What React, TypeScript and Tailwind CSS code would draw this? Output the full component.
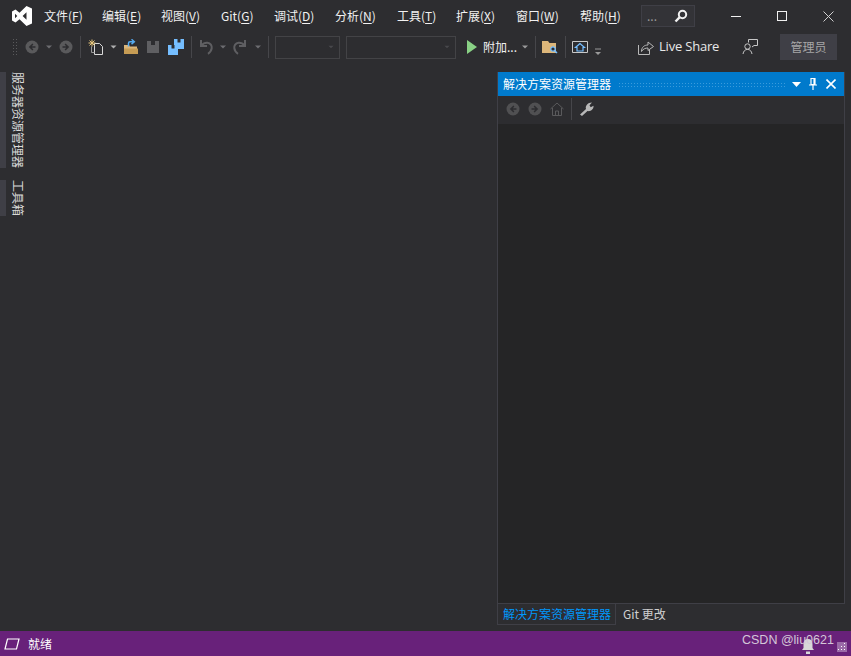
import React from "react";

const Menu = ({ t, k, w }: { t: string; k: string; w: string }) => (
  <div className={`${w} shrink-0 whitespace-nowrap`}>
    {t}(<span className="underline underline-offset-2">{k}</span>)
  </div>
);

const Dd = ({ c = "#6d6d70", w = "w-[14px]" }: { c?: string; w?: string }) => (
  <svg className={`${w} h-[6px] shrink-0`} viewBox="0 0 14 6" preserveAspectRatio="xMidYMid meet">
    <path d="M4 1.500h6l-3 3z" fill={c} />
  </svg>
);

const Sep = ({ w = "w-[13px]" }: { w?: string }) => (
  <div className={`${w} h-[22px] shrink-0 flex justify-center`}>
    <div className="w-px h-full bg-[#46464a]" />
  </div>
);

const Circ = ({ dir, c = "#5a5a5c", w = "w-[16px]" }: { dir: "l" | "r"; c?: string; w?: string }) => (
  <svg className={`${w} h-[14px] shrink-0`} viewBox="0 0 14 14">
    <circle cx="7" cy="7" r="6.500" fill={c} />
    {dir === "l" ? (
      <path d="M10.500 6.200H6.800l1.600-1.600-1-1L3.800 7l3.600 3.400 1-1-1.600-1.600h3.700z" fill="#2d2d30" />
    ) : (
      <path d="M3.500 6.200h3.700L5.600 4.600l1-1L10.200 7l-3.600 3.400-1-1 1.600-1.600H3.500z" fill="#2d2d30" />
    )}
  </svg>
);

const Logo = () => (
  <svg className="w-[20px] h-[20px]" viewBox="0 0 20 20">
    <path
      fill="#fff"
      fillRule="evenodd"
      d="M14.500 0 20 2.500v15L14.500 20l-7-6.800-4 3.300L0 14.500v-9l3.500-2 4 3.300zM14.500 6.200 10.600 10l3.900 3.800zM3 7.800v4.400L5.300 10z"
    />
  </svg>
);

const Floppy = ({ x, y, c, n }: { x: number; y: number; c: string; n: string }) => (
  <g transform={`translate(${x} ${y})`}>
    <path d="M0 0h10v10H0z" fill={c} />
    <path d="M3.500 0h3v3.500h-3z" fill={n} />
  </g>
);

export default function App() {
  return (
    <div
      className="w-[851px] h-[656px] bg-[#2d2d30] text-[#f1f1f1] text-[12px] flex flex-col overflow-hidden relative"
      style={{ fontFamily: '"Noto Sans CJK SC", "Noto Sans", sans-serif' }}
    >
      {/* title row */}
      <div className="h-[32px] flex items-center shrink-0">
        <div className="w-[44px] pl-[12px] shrink-0 flex items-center">
          <Logo />
        </div>
        <Menu t="文件" k="F" w="w-[58px]" />
        <Menu t="编辑" k="E" w="w-[59px]" />
        <Menu t="视图" k="V" w="w-[60px]" />
        <Menu t="Git" k="G" w="w-[53px]" />
        <Menu t="调试" k="D" w="w-[61px]" />
        <Menu t="分析" k="N" w="w-[62px]" />
        <Menu t="工具" k="T" w="w-[59px]" />
        <Menu t="扩展" k="X" w="w-[60px]" />
        <Menu t="窗口" k="W" w="w-[64px]" />
        <Menu t="帮助" k="H" w="w-[61px]" />
        <div className="w-[54px] h-[22px] shrink-0 bg-[#333337] border border-[#3f3f46] flex items-center justify-between pl-[5px] pr-[6px] text-[#9a9a9a]">
          <span className="leading-none">...</span>
          <svg className="w-[14px] h-[14px]" viewBox="0 0 14 14">
            <circle cx="8.500" cy="5.500" r="3.700" fill="none" stroke="#f1f1f1" strokeWidth="2" />
            <path d="M5.800 8.200 1.500 12.500" stroke="#f1f1f1" strokeWidth="2.400" />
          </svg>
        </div>
        <div className="flex-1 flex items-center">
          <div className="w-[46px] flex justify-end">
            <div className="w-[10px] h-px bg-[#f1f1f1]" />
          </div>
          <div className="w-[46px] flex justify-end">
            <div className="w-[10px] h-[10px] border border-[#f1f1f1]" />
          </div>
          <svg className="w-[11px] h-[11px] ml-[36px]" viewBox="0 0 11 11">
            <path d="M.5.5l10 10M10.500.5l-10 10" stroke="#d0d0d0" strokeWidth="1" />
          </svg>
        </div>
      </div>

      {/* toolbar row */}
      <div className="h-[30px] flex items-center shrink-0 pl-[12px]">
        <div className="w-[6px] h-[19px] shrink-0 mr-[7px] bg-[radial-gradient(#5a5a5c_1px,transparent_1px)] bg-[length:3px_3px]" />
        <Circ dir="l" w="w-[14px]" />
        <Dd w="w-[20px]" />
        <Circ dir="r" w="w-[14px]" />
        <Sep w="w-[15px]" />
        <svg className="w-[16px] h-[16px] shrink-0" viewBox="0 0 16 16">
          <path d="M6.500 4.500h5l3 3v8h-8z" fill="none" stroke="#d8d8d8" />
          <path d="M3.500 7.500v6h3" fill="none" stroke="#9a9a9a" />
          <path d="M4 .5v7M.5 4h7M1.500 1.500l5 5M6.500 1.500l-5 5" stroke="#e8c77b" />
        </svg>
        <Dd w="w-[19px]" c="#b0b0b0" />
        <svg className="w-[16px] h-[16px] shrink-0" viewBox="0 0 16 16">
          <path d="M1 6h5l1 1.500h7V15H1z" fill="#dcb67a" />
          <path d="M1 9.500h14V15H1z" fill="#c69c54" />
          <path d="M5.500 7.500V4.200c0-1 .5-1.500 1.500-1.500h3M8.500 .3l2.800 2.400-2.800 2.400" fill="none" stroke="#55aaef" strokeWidth="1.500" />
        </svg>
        <svg className="w-[12px] h-[12px] shrink-0 ml-[8px]" viewBox="0 0 12 12">
          <path d="M0 0h12v12H0z" fill="#5f5f62" />
          <path d="M4 0h4v4H4z" fill="#2d2d30" />
        </svg>
        <svg className="w-[16px] h-[16px] shrink-0 ml-[9px]" viewBox="0 0 16 16">
          <Floppy x={6} y={0} c="#75beff" n="#2d2d30" />
          <Floppy x={0} y={6} c="#75beff" n="#2d2d30" />
        </svg>
        <Sep w="w-[14px]" />
        <svg className="w-[16px] h-[16px] shrink-0" viewBox="0 0 16 16">
          <path d="M3 1v6h6M3.500 6.500C5 4.500 7 3.500 9.500 3.700c3 .3 4.500 3 4.200 5.500-.3 2.300-1.800 4.400-3.700 5.600" fill="none" stroke="#5f5f62" strokeWidth="2" />
        </svg>
        <Dd w="w-[18px]" />
        <svg className="w-[16px] h-[16px] shrink-0" viewBox="0 0 16 16">
          <path d="M13 1v6H7M12.500 6.500C11 4.500 9 3.500 6.500 3.700c-3 .3-4.500 3-4.200 5.500.3 2.300 1.800 4.400 3.700 5.600" fill="none" stroke="#5f5f62" strokeWidth="2" />
        </svg>
        <Dd w="w-[14px] ml-[3px]" />
        <Sep w="w-[6px]" />
        <div className="w-[65px] h-[23px] shrink-0 ml-[4px] border border-[#434346] flex items-center justify-end pr-[2px]">
          <Dd c="#48484b" w="w-[12px]" />
        </div>
        <div className="w-[110px] h-[23px] shrink-0 ml-[6px] border border-[#434346] flex items-center justify-end pr-[2px]">
          <Dd c="#48484b" w="w-[12px]" />
        </div>
        <svg className="w-[10px] h-[14px] shrink-0 ml-[11px]" viewBox="0 0 10 14">
          <path d="M0 0l10 7-10 7z" fill="#89d185" />
        </svg>
        <span className="ml-[6px] shrink-0 w-[35px] whitespace-nowrap">附加...</span>
        <Dd c="#9a9a9a" w="w-[14px]" />
        <Sep w="w-[6px]" />
        <svg className="w-[16px] h-[14px] shrink-0 ml-[4px]" viewBox="0 0 16 14">
          <path d="M0 1h6l1.500 2H14v10H0z" fill="#dcb67a" />
          <circle cx="11" cy="9" r="2.200" fill="#2d2d30" stroke="#75beff" strokeWidth="1.200" />
          <path d="M12.500 10.500 15 13" stroke="#75beff" strokeWidth="1.500" />
        </svg>
        <Sep w="w-[14px]" />
        <svg className="w-[16px] h-[16px] shrink-0" viewBox="0 0 16 16">
          <path d="M.5 2.500h15v11H.5z" fill="none" stroke="#c8c8c8" />
          <path d="M8 4.500 3.500 8.500H5V12h6V8.500h1.500z" fill="none" stroke="#75beff" strokeWidth="1.200" />
        </svg>
        <svg className="w-[8px] h-[8px] shrink-0 ml-[6px] mt-[9px]" viewBox="0 0 8 8">
          <path d="M1 1h6" stroke="#9a9a9a" />
          <path d="M1 4h6L4 7z" fill="#9a9a9a" />
        </svg>
        <svg className="w-[16px] h-[16px] shrink-0 ml-[36px]" viewBox="0 0 16 16">
          <path d="M.5 6v9.500h11V11" fill="none" stroke="#b8b8b8" />
          <path d="M3.500 12.500c0-4.500 3-6.500 6.500-6.500V3l5.500 4.500L10 11.500V9c-2.500 0-5 .8-6.500 3.500z" fill="none" stroke="#b8b8b8" />
        </svg>
        <span className="ml-[5px] shrink-0 w-[60px] text-[13px] text-[#e8e8e8] whitespace-nowrap tracking-[-0.2px]" style={{ fontFamily: '"Open Sans", sans-serif' }}>
          Live Share
        </span>
        <svg className="w-[16px] h-[16px] shrink-0 ml-[23px]" viewBox="0 0 16 16">
          <path d="M6.500 3.500V.5h9v6H12l-2 1.500" fill="none" stroke="#c8c8c8" />
          <circle cx="5.500" cy="7.500" r="2.700" fill="none" stroke="#c8c8c8" />
          <path d="M1 15c.5-2.800 2-4.600 4.500-4.600S9.500 12.200 10 15" fill="none" stroke="#c8c8c8" />
        </svg>
        <div className="w-[57px] h-[26px] shrink-0 ml-[22px] bg-[#3f3f46] text-[#a6a6a6] flex items-center justify-center">
          管理员
        </div>
      </div>

      {/* main */}
      <div className="flex-1 flex min-h-0 pt-[10px] pb-[6px]">
        <div className="w-[497px] shrink-0 flex flex-col gap-[12px]">
          <div className="flex w-[24px]">
            <div className="w-[6px] bg-[#3f3f46]" />
            <div className="[writing-mode:vertical-rl] [text-orientation:sideways] leading-[12px] pl-[5px] text-[#d8d8d8] w-[18px] h-[96px] whitespace-nowrap">服务器资源管理器</div>
          </div>
          <div className="flex w-[24px]">
            <div className="w-[6px] bg-[#3f3f46]" />
            <div className="[writing-mode:vertical-rl] [text-orientation:sideways] leading-[12px] pl-[5px] text-[#d8d8d8] w-[18px] h-[36px] whitespace-nowrap">工具箱</div>
          </div>
        </div>
        <div className="w-[348px] shrink-0 flex flex-col">
          <div className="flex-1 flex flex-col border-x border-b border-t-0 border-[#3f3f46] min-h-0">
            <div className="h-[24px] shrink-0 bg-[#007acc] flex items-center pl-[5px] text-white">
              <span className="whitespace-nowrap">解决方案资源管理器</span>
              <div className="flex-1 h-[5px] mx-[7px] bg-[radial-gradient(#3a9bdc_0.7px,transparent_0.7px)] bg-[length:3px_3px]" />
              <svg className="w-[9px] h-[5px] shrink-0 mr-[8px]" viewBox="0 0 9 5">
                <path d="M0 0h9L4.500 5z" fill="#fff" />
              </svg>
              <svg className="w-[8px] h-[12px] shrink-0 mr-[9px]" viewBox="0 0 8 12">
                <path d="M2 .5h4v6H2zM0 7h8M4 7v5M5 1v5" fill="none" stroke="#fff" strokeWidth="1.200" />
              </svg>
              <svg className="w-[10px] h-[10px] shrink-0 mr-[8px]" viewBox="0 0 10 10">
                <path d="M.5.5l9 9M9.500.5l-9 9" stroke="#fff" strokeWidth="1.600" />
              </svg>
            </div>
            <div className="h-[28px] shrink-0 bg-[#2d2d30] flex items-center pl-[8px] pb-[2px]">
              <Circ dir="l" c="#505052" w="w-[14px]" />
              <Circ dir="r" c="#505052" w="w-[14px] ml-[8px]" />
              <svg className="w-[14px] h-[14px] shrink-0 ml-[8px]" viewBox="0 0 14 14">
                <path d="M.5 7 7 1l6.500 6M2.500 6v7.500h9V6M5.500 13.500V9h3v4.500" fill="none" stroke="#5a5a5c" />
              </svg>
              <Sep w="w-[15px]" />
              <svg className="w-[16px] h-[16px] shrink-0" viewBox="0 0 16 16">
                <path d="M1 13.500 7 8c-1-3 1.500-6.500 6-6.500L10.500 4.300l1.200 2 2.800-1.500c.4 3.500-3 6-6 5.200L3 15z" fill="#b8b8b8" />
              </svg>
            </div>
            <div className="flex-1 bg-[#252526]" />
          </div>
          <div className="h-[21px] shrink-0 flex items-stretch">
            <div className="w-[119px] border border-t-0 border-[#3f3f46] text-[#0097fb] flex items-center pl-[5px] pb-[1px] whitespace-nowrap">
              解决方案资源管理器
            </div>
            <div className="pl-[7px] pb-[2px] flex items-center text-[#d0d0d0]">Git 更改</div>
          </div>
        </div>
      </div>

      {/* status bar */}
      <div className="h-[25px] shrink-0 bg-[#68217a] flex items-center text-white relative">
        <svg className="w-[16px] h-[12px] ml-[4px] shrink-0" viewBox="0 0 16 12">
          <path d="M3.500 1H15l-2.500 10H1z" fill="none" stroke="#fff" strokeWidth="1.200" />
        </svg>
        <span className="ml-[8px]">就绪</span>
        <div className="ml-auto flex items-center">
          <svg className="w-[14px] h-[16px] mr-[22px] mt-[4px]" viewBox="0 0 14 16">
            <path d="M7 1c3 0 4.500 2 4.500 5v4l1.500 2H1l1.500-2V6C2.500 3 4 1 7 1zM5 13.500h4V16H5z" fill="#d8d8d8" />
          </svg>
          <svg className="w-[10px] h-[10px] mr-[4px] mt-[7px] bg-[#9b6aa8]" viewBox="0 0 10 10">
            <path d="M7 1h1v1H7zM7 4h1v1H7zM4 4h1v1H4zM7 7h1v1H7zM4 7h1v1H4zM1 7h1v1H1z" fill="#fff" />
          </svg>
        </div>
        <span className="absolute left-[742px] top-0 text-[12.500px] text-[#d4c6d8] whitespace-nowrap" style={{ fontFamily: '"Liberation Sans", sans-serif' }}>
          CSDN @liu0621
        </span>
      </div>
    </div>
  );
}
